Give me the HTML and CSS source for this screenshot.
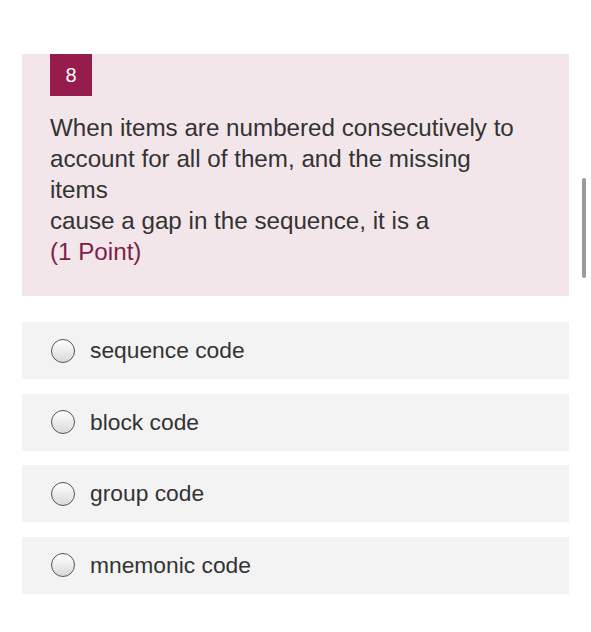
FILE: index.html
```html
<!DOCTYPE html>
<html>
<head>
<meta charset="utf-8">
<link rel="stylesheet" href="styles.css">
</head>
<body>
<div class="page">
  <div class="question">
    <div class="badge">8</div>
    <div class="qtext">When items are numbered consecutively to<br>account for all of them, and the missing<br>items<br>cause a gap in the sequence, it is a<br><span class="points">(1 Point)</span></div>
  </div>
  <div class="options">
    <div class="option"><span class="radio"></span><span class="label">sequence code</span></div>
    <div class="option"><span class="radio"></span><span class="label">block code</span></div>
    <div class="option"><span class="radio"></span><span class="label">group code</span></div>
    <div class="option"><span class="radio"></span><span class="label">mnemonic code</span></div>
  </div>
</div>
<div class="scrollbar"></div>
</body>
</html>
```
FILE: styles.css
```css
html, body {
  margin: 0;
  padding: 0;
  background: #ffffff;
}
body {
  font-family: "Liberation Sans", Arial, sans-serif;
  color: #333333;
}
.page {
  padding: 54px 22px 0 22px;
  width: 547px;
}
.question {
  background: #f2e6ea;
  padding: 0 28px 29px 28px;
}
.badge {
  width: 42px;
  height: 42px;
  background: #951c4c;
  color: #ffffff;
  font-size: 20px;
  display: flex;
  align-items: center;
  justify-content: center;
}
.qtext {
  margin-top: 16px;
  font-size: 24.2px;
  line-height: 31px;
  color: #333333;
}
.points {
  color: #7c1f48;
}
.options {
  margin-top: 26px;
  display: flex;
  flex-direction: column;
  gap: 14.5px;
}
.option {
  background: #f3f3f3;
  height: 57px;
  display: flex;
  align-items: center;
  padding-left: 29px;
}
.radio {
  width: 22px;
  height: 22px;
  border-radius: 50%;
  border: 1.5px solid #555555;
  background: linear-gradient(#ffffff, #d9d9d9);
  flex: none;
}
.label {
  margin-left: 15px;
  font-size: 22.8px;
  color: #333333;
}
.scrollbar {
  position: absolute;
  left: 582px;
  top: 178px;
  width: 4px;
  height: 100px;
  border-radius: 2px;
  background: #9a9a9a;
}
```
